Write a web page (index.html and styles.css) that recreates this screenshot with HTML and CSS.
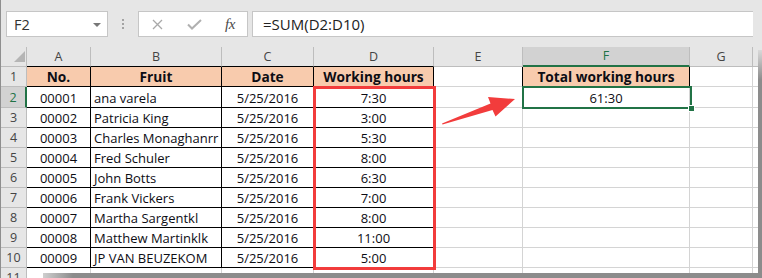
FILE: index.html
```html
<!DOCTYPE html>
<html>
<head>
<meta charset="utf-8">
<link rel="stylesheet" href="styles.css">
</head>
<body>
<div class="app">
  <div class="fbar">
    <div class="namebox"><span class="ref">F2</span><span class="caret"></span></div>
    <div class="grip"><i></i><i></i><i></i></div>
    <div class="fnbox">
      <svg class="ico-x" width="11" height="11" viewBox="0 0 11 11"><path d="M1 1L10 10M10 1L1 10" stroke="#a9a9a9" stroke-width="1.3" fill="none"/></svg>
      <svg class="ico-ok" width="15" height="11" viewBox="0 0 15 11"><path d="M1 5.5L5 9.5L14 1" stroke="#b0b0b0" stroke-width="2" fill="none"/></svg>
      <span class="fx">fx</span>
    </div>
    <div class="formula">=SUM(D2:D10)</div>
  </div>
  <div class="sheet">
    <div class="corner"><svg width="11" height="11" viewBox="0 0 11 11"><path d="M11 0L11 11L0 11Z" fill="#b5b5b5"/></svg></div>
    <div class="ch kb">A</div><div class="ch kb">B</div><div class="ch kb">C</div><div class="ch kb">D</div><div class="ch">E</div><div class="ch csel">F</div><div class="ch">G</div><div class="ch tail"></div>

    <div class="rh">1</div><div class="c t th">No.</div><div class="c t th">Fruit</div><div class="c t th">Date</div><div class="c t th">Working hours</div><div class="c bk"></div><div class="c t th">Total working hours</div><div class="c"></div><div class="c tail"></div>

    <div class="rh rsel">2</div><div class="c t">00001</div><div class="c t l">ana varela</div><div class="c t">5/25/2016</div><div class="c t">7:30</div><div class="c"></div><div class="c act">61:30</div><div class="c"></div><div class="c tail"></div>
    <div class="rh">3</div><div class="c t">00002</div><div class="c t l">Patricia King</div><div class="c t">5/25/2016</div><div class="c t">3:00</div><div class="c"></div><div class="c"></div><div class="c"></div><div class="c tail"></div>
    <div class="rh">4</div><div class="c t">00003</div><div class="c t l">Charles Monaghanrr</div><div class="c t">5/25/2016</div><div class="c t">5:30</div><div class="c"></div><div class="c"></div><div class="c"></div><div class="c tail"></div>
    <div class="rh">5</div><div class="c t">00004</div><div class="c t l">Fred Schuler</div><div class="c t">5/25/2016</div><div class="c t">8:00</div><div class="c"></div><div class="c"></div><div class="c"></div><div class="c tail"></div>
    <div class="rh">6</div><div class="c t">00005</div><div class="c t l">John Botts</div><div class="c t">5/25/2016</div><div class="c t">6:30</div><div class="c"></div><div class="c"></div><div class="c"></div><div class="c tail"></div>
    <div class="rh">7</div><div class="c t">00006</div><div class="c t l">Frank Vickers</div><div class="c t">5/25/2016</div><div class="c t">7:00</div><div class="c"></div><div class="c"></div><div class="c"></div><div class="c tail"></div>
    <div class="rh">8</div><div class="c t">00007</div><div class="c t l">Martha Sargentkl</div><div class="c t">5/25/2016</div><div class="c t">8:00</div><div class="c"></div><div class="c"></div><div class="c"></div><div class="c tail"></div>
    <div class="rh">9</div><div class="c t">00008</div><div class="c t l">Matthew Martinklk</div><div class="c t">5/25/2016</div><div class="c t">11:00</div><div class="c"></div><div class="c"></div><div class="c"></div><div class="c tail"></div>
    <div class="rh">10</div><div class="c t">00009</div><div class="c t l">JP VAN BEUZEKOM</div><div class="c t">5/25/2016</div><div class="c t">5:00</div><div class="c"></div><div class="c"></div><div class="c"></div><div class="c tail"></div>
    <div class="rh">11</div><div class="c"></div><div class="c"></div><div class="c"></div><div class="c"></div><div class="c"></div><div class="c"></div><div class="c"></div><div class="c tail"></div>
  </div>

  <div class="redbox"></div>
  <div class="selbox"><span class="handle"></span></div>
  <svg class="arrow" width="762" height="278" viewBox="0 0 762 278">
    <polygon points="441,123.5 489.5,103.5 487,97 514,99 494.5,116.5 491.5,110 441.5,124.5" fill="#f23c3c"/>
  </svg>
  <div class="shadow-b"></div>
  <div class="shadow-r"></div>
</div>
</body>
</html>
```

FILE: styles.css
```css
* { box-sizing: border-box; }
html, body { margin: 0; padding: 0; }
body {
  width: 762px;
  height: 278px;
  overflow: hidden;
  background: #fff;
  font-family: "Open Sans", sans-serif;
}
.app {
  position: relative;
  width: 762px;
  height: 278px;
  overflow: hidden;
  border-left: 1px solid #8f8f8f;
  background: #fff;
}

/* formula bar */
.fbar {
  height: 47px;
  background: #e6e6e6;
  display: flex;
  align-items: flex-start;
  padding-top: 11px;
  padding-left: 5px;
}
.namebox {
  width: 102px;
  height: 26px;
  background: #fff;
  border: 1px solid #c6c6c6;
  display: flex;
  align-items: center;
  justify-content: space-between;
  padding: 0 6px 0 7px;
  font-size: 14.5px;
  color: #333;
}
.caret {
  width: 0; height: 0;
  border-left: 4px solid transparent;
  border-right: 4px solid transparent;
  border-top: 4px solid #777;
  margin-top: 1px;
}
.grip {
  width: 30px;
  height: 26px;
  display: flex;
  flex-direction: column;
  align-items: center;
  justify-content: center;
  gap: 2px;
}
.grip i {
  display: block;
  width: 2px; height: 2px;
  background: #a3a3a3;
}
.fnbox {
  width: 110px;
  height: 26px;
  background: #fff;
  border: 1px solid #c6c6c6;
  display: flex;
  align-items: center;
  padding-left: 13px;
}
.ico-x { margin-top: 1px; }
.ico-ok { margin-left: 24px; margin-top: 1px; }
.fx {
  margin-left: 23px;
  font-family: "Liberation Serif", serif;
  font-style: italic;
  font-size: 15px;
  color: #4a4a4a;
  letter-spacing: -0.5px;
}
.formula {
  margin-left: 4px;
  width: 501px;
  height: 26px;
  background: #fff;
  border: 1px solid #c6c6c6;
  border-right: none;
  padding-left: 10px;
  font-size: 15px;
  line-height: 24px;
  color: #222;
}

/* sheet */
.sheet {
  display: grid;
  grid-template-columns: 26px 64px 131px 92px 120px 89px 167px 63px 9px;
  grid-template-rows: 20px 20px 21px repeat(8, 20px) 20px;
}
.corner, .ch, .rh {
  background: #e6e6e6;
  border-right: 1px solid #bdbdbd;
  border-bottom: 1px solid #bdbdbd;
  font-size: 12.5px;
  color: #444;
}
.corner {
  display: flex;
  align-items: flex-end;
  justify-content: flex-end;
  padding: 0 1px 4px 0;
}
.ch {
  display: flex;
  align-items: flex-end;
  justify-content: center;
  line-height: 16px;
  padding-bottom: 1px;
}
.ch.kb { border-bottom-color: #000; }
.ch.csel {
  background: #d2d2d2;
  color: #217346;
  border-bottom: 2px solid #217346;
}
.ch.tail, .c.tail { border-right: none; }
.ch.tail { background: #e6e6e6; }
.rh {
  display: flex;
  align-items: flex-end;
  justify-content: center;
  line-height: 16px;
  padding-bottom: 1px;
}
.rh.rsel {
  background: #d2d2d2;
  color: #217346;
  border-right: 2px solid #217346;
}
.c {
  border-right: 1px solid #d4d4d4;
  border-bottom: 1px solid #d4d4d4;
  display: flex;
  align-items: flex-end;
  justify-content: center;
  font-size: 13px;
  line-height: 17px;
  color: #0d0d14;
  white-space: nowrap;
  overflow: hidden;
}
.c.t { border-right-color: #000; border-bottom-color: #000; }
.c.bk { border-right-color: #000; }
.c.l { justify-content: flex-start; padding-left: 3px; }
.c.th {
  background: #f8cbad;
  font-weight: 700;
  font-size: 13.7px;
  line-height: 18px;
}

/* overlays */
.redbox {
  position: absolute;
  left: 312px;
  top: 86px;
  width: 123px;
  height: 184px;
  border: 3px solid #f23c3c;
}
.selbox {
  position: absolute;
  left: 521px;
  top: 86px;
  width: 170px;
  height: 23px;
  border: 2px solid #217346;
}
.handle {
  position: absolute;
  right: -5px;
  bottom: -5px;
  width: 7px;
  height: 7px;
  background: #217346;
  border: 1px solid #fff;
}
.arrow { position: absolute; left: 0; top: 0; pointer-events: none; }
.shadow-b {
  position: absolute;
  left: 42px;
  right: 0;
  bottom: 0;
  height: 5px;
  background: linear-gradient(to right, #cfcfcf, #8c8c8c 30px);
}
.shadow-r {
  position: absolute;
  right: 0;
  top: 50px;
  bottom: 0;
  width: 4px;
  background: linear-gradient(to bottom, #d9d9d9, #8c8c8c 30px);
}
```
